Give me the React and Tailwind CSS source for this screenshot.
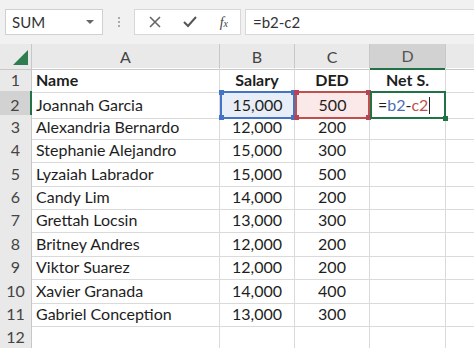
import React from "react";

const rows = [
    ["Joannah Garcia", "15,000", "500"],
    ["Alexandria Bernardo", "12,000", "200"],
    ["Stephanie Alejandro", "15,000", "300"],
    ["Lyzaiah Labrador", "15,000", "500"],
    ["Candy Lim", "14,000", "200"],
    ["Grettah Locsin", "13,000", "300"],
    ["Britney Andres", "12,000", "200"],
    ["Viktor Suarez", "12,000", "200"],
    ["Xavier Granada", "14,000", "400"],
    ["Gabriel Conception", "13,000", "300"],
];

const cols = "grid grid-cols-[32px_188px_75px_75px_76px_1fr]";

function Handle({ className }) {
    return <span className={"absolute w-[5px] h-[5px] " + className} />;
}

export default function App() {
    return (
        <div className="w-[474px] h-[348px] overflow-hidden bg-white text-[#1e1e1e] font-['Lato','Liberation_Sans',sans-serif]">
            {/* formula bar */}
            <div className="h-[44px] bg-[#f1f1f1] flex items-start pt-[9px] pl-[5px]">
                <div className="w-[98px] h-[26px] bg-white border border-[#d0d0d0] flex items-center justify-between pl-[6px] pr-[8px]">
                    <span className="text-[15px] text-[#333]">SUM</span>
                    <span className="w-0 h-0 border-l-[4px] border-r-[4px] border-t-[4px] border-l-transparent border-r-transparent border-t-[#666]" />
                </div>
                <div className="w-[31px] h-[26px] flex flex-col items-center justify-center gap-[2px]">
                    <span className="w-[2px] h-[2px] bg-[#aaa]" />
                    <span className="w-[2px] h-[2px] bg-[#aaa]" />
                    <span className="w-[2px] h-[2px] bg-[#aaa]" />
                </div>
                <div className="w-[107px] h-[26px] bg-white border border-[#d8d8d8] flex items-center justify-between pl-[14px] pr-[12px] text-[#555]">
                    <svg width="12" height="12" viewBox="0 0 12 12" stroke="#666" strokeWidth="1.6" fill="none">
                        <path d="M1 1L11 11M11 1L1 11" />
                    </svg>
                    <svg width="14" height="12" viewBox="0 0 14 12" stroke="#555" strokeWidth="2" fill="none">
                        <path d="M1 6L5 10L13 1" />
                    </svg>
                    <span className="italic text-[14px] text-[#444] font-['Liberation_Serif',serif]">
                        f<span className="text-[10px]">x</span>
                    </span>
                </div>
                <div className="flex-1 h-[26px] ml-[4px] bg-white border-y border-l border-[#d8d8d8] flex items-center pl-[7px] text-[15px] text-[#333]">
                    =b2-c2
                </div>
            </div>

            {/* column headers */}
            <div className={cols + " h-[24px] bg-[#e9e9e9] text-[16px] text-[#444]"}>
                <div className="relative border-r border-b border-[#c8c8c8]">
                    <svg className="absolute right-[3px] bottom-[4px]" width="15" height="15" viewBox="0 0 15 15">
                        <path d="M15 0V15H0Z" fill="#2e7d4f" />
                    </svg>
                </div>
                <div className="flex items-center justify-center border-r border-b border-[#c8c8c8]">A</div>
                <div className="flex items-center justify-center border-r border-b border-[#c8c8c8]">B</div>
                <div className="flex items-center justify-center border-r border-b border-[#c8c8c8]">C</div>
                <div className="flex items-center justify-center bg-[#d2d2d2] border-r border-[#c8c8c8] border-b-2 border-b-[#217346] text-[#555]">D</div>
                <div className="border-b border-[#c8c8c8]" />
            </div>

            {/* header row */}
            <div className={cols + " h-[23.4px] text-[16px]"}>
                <div className="bg-[#e9e9e9] border-r border-b border-[#c8c8c8] flex items-center justify-center text-[#444]">1</div>
                <div className="border-r border-b border-[#dadada] flex items-center pl-[4px] font-bold">Name</div>
                <div className="border-r border-b border-[#dadada] flex items-center justify-center font-bold">Salary</div>
                <div className="border-r border-b border-[#dadada] flex items-center justify-center font-bold">DED</div>
                <div className="border-r border-b border-[#dadada] flex items-center justify-center font-bold">Net S.</div>
                <div className="border-b border-[#dadada]" />
            </div>

            {rows.map((r, i) => {
                const sel = i === 0;
                return (
                    <div key={i} className={cols + " h-[23.4px] text-[16px]"}>
                        <div className={"border-r border-b border-[#c8c8c8] flex items-center justify-center text-[#444] " + (sel ? "bg-[#d2d2d2] border-r-2 border-r-[#217346]" : "bg-[#e9e9e9]")}>
                            {i + 2}
                        </div>
                        <div className="border-r border-b border-[#dadada] flex items-center pl-[4px] whitespace-nowrap">{r[0]}</div>
                        {sel ? (
                            <>
                                <div className="relative bg-[#e8eef8] border-2 border-[#4472c4] flex items-center justify-center">
                                    {r[1]}
                                    <Handle className="bg-[#4472c4] -left-[3px] -top-[3px]" />
                                    <Handle className="bg-[#4472c4] -right-[3px] -top-[3px]" />
                                    <Handle className="bg-[#4472c4] -left-[3px] -bottom-[3px]" />
                                    <Handle className="bg-[#4472c4] -right-[3px] -bottom-[3px]" />
                                </div>
                                <div className="relative bg-[#fbe8e8] border-2 border-[#c0504d] flex items-center justify-center">
                                    {r[2]}
                                    <Handle className="bg-[#b5445a] -left-[3px] -top-[3px]" />
                                    <Handle className="bg-[#b5445a] -right-[3px] -top-[3px]" />
                                    <Handle className="bg-[#b5445a] -left-[3px] -bottom-[3px]" />
                                    <Handle className="bg-[#b5445a] -right-[3px] -bottom-[3px]" />
                                </div>
                                <div className="relative border-2 border-[#217346] flex items-center pl-[6px]">
                                    <span>=</span>
                                    <span className="text-[#4a6fb5]">b2</span>
                                    <span>-</span>
                                    <span className="text-[#c0504d]">c2</span>
                                    <span className="w-px h-[17px] bg-[#222] ml-[1px]" />
                                    <Handle className="bg-[#217346] -right-[4px] -bottom-[4px]" />
                                </div>
                            </>
                        ) : (
                            <>
                                <div className="border-r border-b border-[#dadada] flex items-center justify-center">{r[1]}</div>
                                <div className="border-r border-b border-[#dadada] flex items-center justify-center">{r[2]}</div>
                                <div className="border-r border-b border-[#dadada]" />
                            </>
                        )}
                        <div className="border-b border-[#dadada]" />
                    </div>
                );
            })}

            <div className={cols + " h-[23.4px] text-[16px]"}>
                <div className="bg-[#e9e9e9] border-r border-b border-[#c8c8c8] flex items-center justify-center text-[#444]">12</div>
                <div className="border-r border-b border-[#dadada]" />
                <div className="border-r border-b border-[#dadada]" />
                <div className="border-r border-b border-[#dadada]" />
                <div className="border-r border-b border-[#dadada]" />
                <div className="border-b border-[#dadada]" />
            </div>
        </div>
    );
}
